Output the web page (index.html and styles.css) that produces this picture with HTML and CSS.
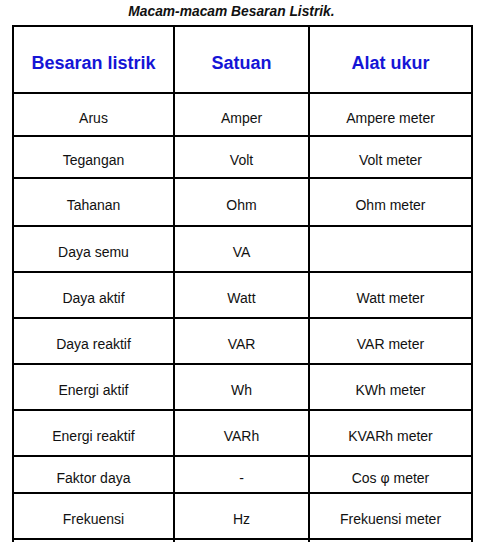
FILE: index.html
```html
<!DOCTYPE html>
<html lang="id">
<head>
<meta charset="utf-8">
<title>Macam-macam Besaran Listrik</title>
<link rel="stylesheet" href="styles.css">
</head>
<body>
<div class="caption">Macam-macam Besaran Listrik.</div>
<div class="grid">
  <div class="cell head">Besaran listrik</div>
  <div class="cell head">Satuan</div>
  <div class="cell head">Alat ukur</div>

  <div class="cell r43">Arus</div>
  <div class="cell r43">Amper</div>
  <div class="cell r43">Ampere meter</div>

  <div class="cell r42">Tegangan</div>
  <div class="cell r42">Volt</div>
  <div class="cell r42">Volt meter</div>

  <div class="cell r48">Tahanan</div>
  <div class="cell r48">Ohm</div>
  <div class="cell r48">Ohm meter</div>

  <div class="cell r46">Daya semu</div>
  <div class="cell r46">VA</div>
  <div class="cell r46"></div>

  <div class="cell r46">Daya aktif</div>
  <div class="cell r46">Watt</div>
  <div class="cell r46">Watt meter</div>

  <div class="cell r46">Daya reaktif</div>
  <div class="cell r46">VAR</div>
  <div class="cell r46">VAR meter</div>

  <div class="cell r46">Energi aktif</div>
  <div class="cell r46">Wh</div>
  <div class="cell r46">KWh meter</div>

  <div class="cell r46">Energi reaktif</div>
  <div class="cell r46">VARh</div>
  <div class="cell r46">KVARh meter</div>

  <div class="cell r37">Faktor daya</div>
  <div class="cell r37">-</div>
  <div class="cell r37">Cos φ meter</div>

  <div class="cell r46">Frekuensi</div>
  <div class="cell r46">Hz</div>
  <div class="cell r46">Frekuensi meter</div>

  <div class="cell tail"></div>
  <div class="cell tail"></div>
  <div class="cell tail"></div>
</div>
</body>
</html>
```
FILE: styles.css
```css
html, body {
  margin: 0;
  padding: 0;
  background: #ffffff;
}

body {
  font-family: "Liberation Sans", Arial, sans-serif;
  color: #111111;
}

.caption {
  box-sizing: border-box;
  height: 25px;
  padding-top: 4px;
  padding-right: 27px;
  font-size: 13.8px;
  line-height: 16px;
  font-weight: bold;
  font-style: italic;
  text-align: center;
  color: #111111;
}

.grid {
  display: grid;
  grid-template-columns: 161px 135px 163px;
  width: 459px;
  margin-left: 12px;
  border-left: 2px solid #000;
  border-top: 2px solid #000;
}

.cell {
  box-sizing: border-box;
  display: flex;
  align-items: center;
  justify-content: center;
  border-right: 2px solid #000;
  border-bottom: 2px solid #000;
  padding-top: 6px;
  font-size: 14px;
  line-height: 16px;
  text-align: center;
}

.head {
  height: 67px;
  padding-top: 7px;
  font-size: 18px;
  line-height: 20px;
  font-weight: bold;
  color: #1515d6;
}

.r37 { height: 37px; }
.r42 { height: 42px; }
.r43 { height: 43px; }
.r46 { height: 46px; }
.r48 { height: 48px; }

.tail {
  height: 2px;
  padding: 0;
  border-bottom: none;
}
```
